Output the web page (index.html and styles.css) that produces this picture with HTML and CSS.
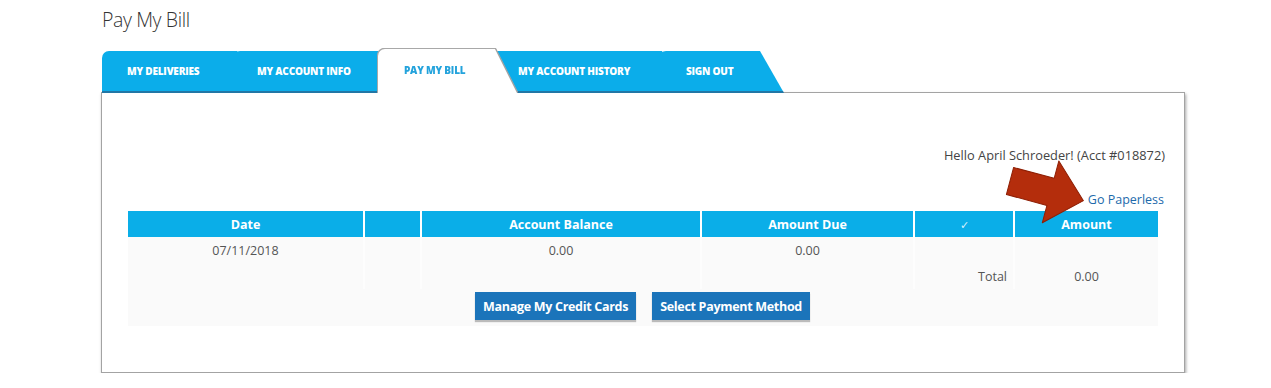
FILE: index.html
```html
<!DOCTYPE html>
<html lang="en">
<head>
<meta charset="utf-8">
<title>Pay My Bill</title>
<link rel="stylesheet" href="styles.css">
</head>
<body>
<div class="page">
  <h1 class="title">Pay My Bill</h1>
  <nav class="tabbar">
    <a class="tab tab-1"><span>MY DELIVERIES</span></a>
    <a class="tab tab-2"><span>MY ACCOUNT INFO</span></a>
    <div class="tab-active-wrap">
      <a class="tab tab-active"><span>PAY MY BILL</span></a>
    </div>
    <a class="tab tab-4"><span>MY ACCOUNT HISTORY</span></a>
    <a class="tab tab-5"><span>SIGN OUT</span></a>
  </nav>
  <section class="panel">
    <p class="greeting">Hello April Schroeder! (Acct #018872)</p>
    <p class="paperless"><a href="#">Go Paperless</a></p>
    <svg class="arrow" width="110" height="80" viewBox="0 0 110 80" aria-hidden="true">
      <g transform="translate(13 30) rotate(15)">
        <polygon points="0,-14 42,-14 42,-32 76,0 42,32 42,14 0,14" fill="#b42d0c" stroke="#8e1f05" stroke-width="1" stroke-linejoin="round"/>
      </g>
    </svg>
    <table class="bill">
      <colgroup>
        <col style="width:236px">
        <col style="width:57px">
        <col style="width:280px">
        <col style="width:213px">
        <col style="width:100px">
        <col style="width:144px">
      </colgroup>
      <thead>
        <tr>
          <th>Date</th>
          <th></th>
          <th>Account Balance</th>
          <th>Amount Due</th>
          <th class="check">&#10003;</th>
          <th>Amount</th>
        </tr>
      </thead>
      <tbody>
        <tr>
          <td>07/11/2018</td>
          <td></td>
          <td>0.00</td>
          <td>0.00</td>
          <td></td>
          <td></td>
        </tr>
        <tr>
          <td></td>
          <td></td>
          <td></td>
          <td></td>
          <td class="total">Total</td>
          <td>0.00</td>
        </tr>
        <tr class="actions">
          <td colspan="6">
            <div class="buttons">
              <button class="btn">Manage My Credit Cards</button>
              <button class="btn">Select Payment Method</button>
            </div>
          </td>
        </tr>
      </tbody>
    </table>
  </section>
</div>
</body>
</html>
```

FILE: styles.css
```css
* { box-sizing: border-box; }

body {
  margin: 0;
  background: #ffffff;
  font-family: "Open Sans", "Liberation Sans", sans-serif;
  color: #444;
}

.page {
  padding: 8px 0 0 101px;
  width: 1271px;
}

.title {
  margin: 0 0 17px 1px;
  font-family: "Open Sans", sans-serif;
  font-weight: 300;
  font-size: 19.5px;
  line-height: 24px;
  color: #333;
  letter-spacing: -0.4px;
}

/* ---------- tabs ---------- */
.tabbar {
  display: flex;
  align-items: flex-end;
  padding-left: 1px;
  margin-bottom: -1px;
  position: relative;
  z-index: 2;
}

.tab {
  display: flex;
  align-items: center;
  height: 42px;
  background: #0badea;
  border-bottom: 2px solid #2277a6;
  border-top-left-radius: 7px;
  color: #fff;
  font-family: "Open Sans", sans-serif;
  font-weight: 800;
  font-size: 10px;
  letter-spacing: -0.2px;
  text-decoration: none;
  white-space: nowrap;
  clip-path: polygon(0 0, calc(100% - 22px) 0, 100% 100%, 0 100%);
}

.tab-1 { width: 157px; padding-left: 25px; z-index: 1; }
.tab-2 { width: 170px; padding-left: 24px; margin-left: -26px; z-index: 2; }
.tab-4 { width: 197px; padding-left: 31px; margin-left: -30px; z-index: 3; }
.tab-5 { width: 125px; padding-left: 27px; margin-left: -25px; z-index: 4;
  clip-path: polygon(0 0, calc(100% - 24px) 0, 100% 100%, 0 100%); }

.tab-active-wrap {
  margin-left: -25px;
  z-index: 5;
  filter: drop-shadow(-1px 0 0 #a8a8a8) drop-shadow(1px 0 0 #a0a0a0) drop-shadow(0 -1px 0 #a8a8a8);
}

.tab-active {
  width: 139px;
  height: 44px;
  padding-left: 26px;
  padding-bottom: 2px;
  background: #ffffff;
  border-bottom: none;
  border-top-left-radius: 7px;
  color: #24a3dc;
}

/* ---------- panel ---------- */
.panel {
  position: relative;
  width: 1084px;
  border: 1px solid #a3a3a3;
  box-shadow: 1px 2px 3px rgba(0, 0, 0, 0.35);
  background: #fff;
  padding: 0 19px 46px 26px;
  display: flex;
  flex-direction: column;
  align-items: flex-end;
}

.greeting {
  margin: 53px 0 0;
  font-size: 12.8px;
  line-height: 18px;
  color: #444;
}

.paperless {
  margin: 27px 1px 0 0;
  font-size: 12.5px;
  line-height: 18px;
}

.paperless a {
  color: #1d6aab;
  text-decoration: none;
}

.arrow {
  position: absolute;
  left: 895px;
  top: 58px;
}

/* ---------- table ---------- */
.bill {
  align-self: flex-start;
  width: 1030px;
  margin-top: 2px;
  border-collapse: collapse;
  table-layout: fixed;
  font-size: 12.5px;
}

.bill th {
  height: 26px;
  padding: 0;
  background: #0aaee8;
  color: #fff;
  font-weight: 700;
  text-align: center;
  border-left: 2px solid #fff;
}

.bill th:first-child,
.bill td:first-child {
  border-left: none;
}

.bill th.check {
  font-size: 11px;
  font-weight: 400;
  color: #d8f1fc;
}

.bill td {
  height: 26px;
  padding: 0;
  background: #fafafa;
  text-align: center;
  color: #555;
  border-left: 2px solid #fdfdfd;
}

.bill td.total {
  text-align: right;
  padding-right: 6px;
}

.bill tr.actions td {
  height: 37px;
  padding: 3px 0 6px;
  vertical-align: top;
}

.buttons {
  display: flex;
  justify-content: center;
  gap: 16px;
  padding-right: 1px;
}

.btn {
  height: 28px;
  padding: 0 8px;
  border: none;
  background: #1b74ba;
  color: #fff;
  font-family: "Open Sans", sans-serif;
  font-weight: 700;
  font-size: 12.5px;
  letter-spacing: -0.3px;
  box-shadow: 0 2px 1px rgba(0, 0, 0, 0.25);
  cursor: pointer;
}
```
